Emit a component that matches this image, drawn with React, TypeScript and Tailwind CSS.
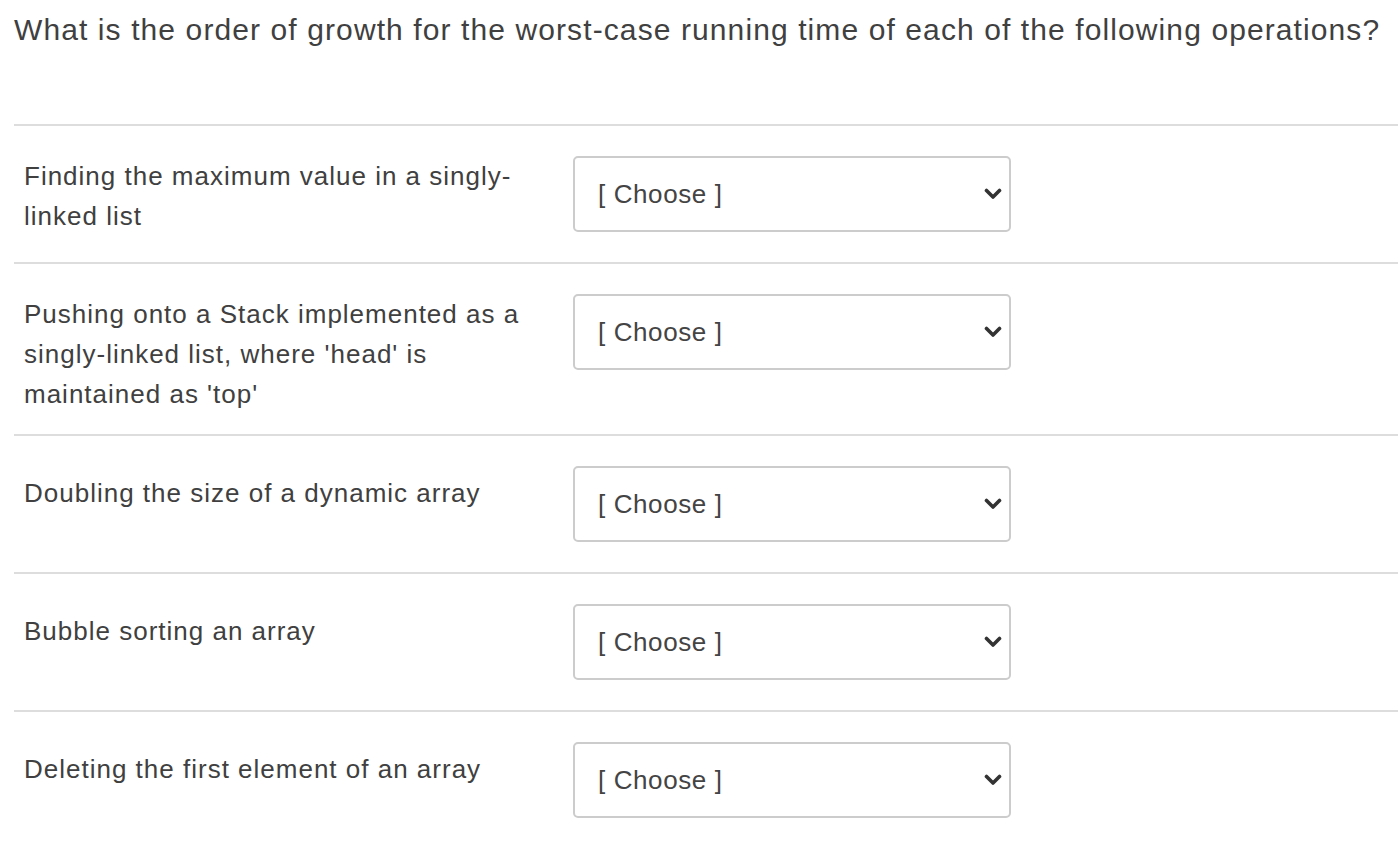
const rows: { label: string; wrapped: boolean }[] = [
  { label: "Finding the maximum value in a singly-linked list", wrapped: true },
  { label: "Pushing onto a Stack implemented as a singly-linked list, where 'head' is maintained as 'top'", wrapped: true },
  { label: "Doubling the size of a dynamic array", wrapped: false },
  { label: "Bubble sorting an array", wrapped: false },
  { label: "Deleting the first element of an array", wrapped: false },
];

function Chevron() {
  return (
    <svg width="18" height="12" viewBox="0 0 18 12" className="shrink-0">
      <path d="M2.5 2.5 L9 9 L15.5 2.5" fill="none" stroke="#333" strokeWidth="3.6" strokeLinecap="round" strokeLinejoin="round" />
    </svg>
  );
}

function ChooseBox() {
  return (
    <div className="w-[438px] h-[76px] mb-[10px] shrink-0 flex items-center justify-between pl-[23px] pr-[7px] border-2 border-[#cccccc] rounded-[5px] bg-white text-[26px] tracking-[0.6px] text-[#444444]">
      <span>[ Choose ]</span>
      <Chevron />
    </div>
  );
}

export default function App() {
  return (
    <div className="min-h-screen bg-white text-[#404040]" style={{ fontFamily: '"Liberation Sans", Arial, sans-serif' }}>
      <h1 className="pl-[14px] pt-[10px] text-[30px] tracking-[1.1px] leading-[40px] font-normal whitespace-nowrap">
        What is the order of growth for the worst-case running time of each of the following operations?
      </h1>

      <div className="mt-[74px] ml-[14px]">
        {rows.map((row) => (
          <div key={row.label} className="flex items-start border-t-2 border-[#dddddd] px-[10px] pt-[30px] pb-[20px]">
            <div className={`w-[549px] pr-[10px] text-[26px] tracking-[1px] leading-[40px] ${row.wrapped ? "" : "mt-[7px]"}`}>
              {row.label}
            </div>
            <ChooseBox />
          </div>
        ))}
      </div>
    </div>
  );
}
